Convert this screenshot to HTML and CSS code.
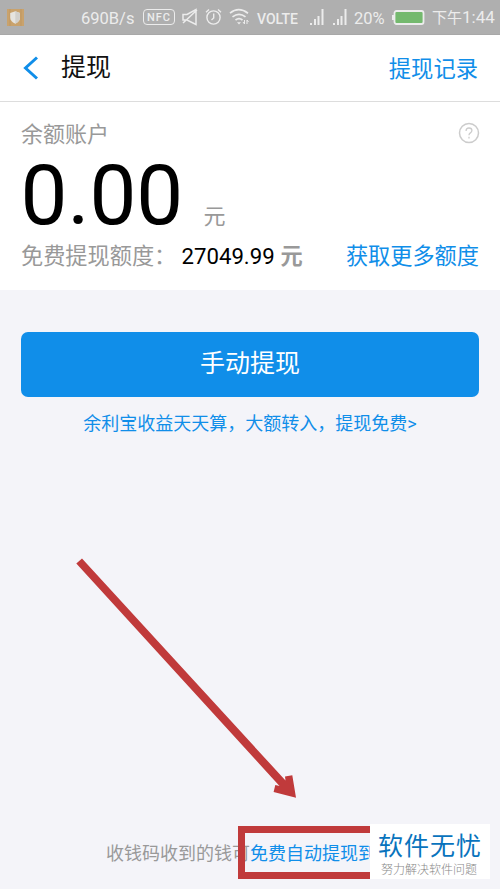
FILE: index.html
```html
<!DOCTYPE html>
<html lang="zh-CN">
<head>
<meta charset="utf-8">
<title>提现</title>
<link rel="stylesheet" href="styles.css">
</head>
<body>
<div class="screen">
  <div class="status">
    <svg class="shield" width="17" height="17" viewBox="0 0 17 17"><rect width="17" height="17" fill="#c9a26c"/><path d="M3 0v17M14 0v17" stroke="#b98f58" opacity=".5"/><path d="M8.300 2.300L13 4v4.500q0 4-4.700 6.300Q3.200 12.500 3.200 8.500V4z" fill="#e6e4df"/><path d="M8.300 2.300L13 4v4.500q0 4-4.700 6.300z" fill="#d2d0cb"/></svg>
    <span class="speed">690B/s</span>
    <span class="nfc">NFC</span>
    <svg class="mute" width="17" height="18" viewBox="0 0 17 18" fill="none" stroke="#ececec" stroke-width="1.500"><path d="M1 6.500h4L14 1.500v15L5 12H1zM1 15L15 2"/></svg>
    <svg class="alarm" width="17" height="18" viewBox="0 0 17 18" fill="none" stroke="#ececec" stroke-width="1.400"><circle cx="8.500" cy="9.500" r="6.600"/><path d="M8.700 5.500v4.500L6.500 12M1 4.200L4 1.500M16 4.200L13 1.500"/></svg>
    <svg class="wifi" width="21" height="18" viewBox="0 0 21 18" fill="none" stroke="#ececec" stroke-width="1.700"><path d="M1 5.200q8.500-7 18 0M3.500 8.800q6.500-5 13 0M6.500 12q3.500-2.800 7 0"/><path d="M8 14.300h4l-2 2.200z" fill="#ececec" stroke="none"/><path d="M15.500 12v4M18 12v4M14 14l1.500 2M19.500 14L18 12" stroke-width="1"/></svg>
    <span class="volte">VOLTE</span>
    <svg class="signal" width="15" height="17" viewBox="0 0 15 17" fill="#ececec"><path d="M0 14h2v2H0zM4 10h2v6H4zM7.500 7h2v9h-2zM11.500 0h2v16h-2z"/></svg>
    <svg class="signal two" width="15" height="17" viewBox="0 0 15 17" fill="#ececec"><path d="M0 14h2v2H0zM4 10h2v6H4zM7.500 7h2v9h-2zM11.500 0h2v16h-2z"/></svg>
    <span class="percent">20%</span>
    <svg class="battery" width="33" height="15" viewBox="0 0 33 15"><rect x="2.500" y="1" width="29" height="13" rx="2" fill="#74b96e" stroke="#ececec" stroke-width="1.800"/><path d="M0 5h2v5H0z" fill="#ececec"/></svg>
    <span class="time"><span class="period">下午</span>1:44</span>
  </div>
  <header class="nav">
    <svg class="back" width="16" height="24" viewBox="0 0 16 24" fill="none" stroke="#108ee9" stroke-width="3"><path d="M15 1.500L3.500 12L15 22.500"/></svg>
    <h1>提现</h1>
    <a class="record">提现记录</a>
  </header>
  <section class="account">
    <div class="row label-row"><span>余额账户</span>
      <svg width="22" height="22" viewBox="0 0 22 22" fill="none" stroke="#ccc" stroke-width="1.500"><circle cx="11" cy="11" r="9.500"/><path d="M8.100 9q0-3 2.900-3t2.900 2.600q0 1.300-1.500 2.300-1.400.9-1.400 2.400M11 14.800v1.600" stroke-width="1.300"/></svg>
    </div>
    <div class="balance"><span class="amount">0.00</span><span class="unit">元</span></div>
    <div class="row quota"><span class="quota-label">免费提现额度：</span><span class="quota-value">27049.99</span><b>元</b><a class="more">获取更多额度</a></div>
  </section>
  <main>
    <button class="primary">手动提现</button>
    <a class="promo">余利宝收益天天算，大额转入，提现免费&gt;</a>
  </main>
  <footer><span>收钱码收到的钱可</span><a>免费自动提现到卡</a></footer>
  <svg class="arrow" width="500" height="889" viewBox="0 0 500 889"><path d="M82 558.500L285.500 780.500L285 776.500L292.300 775.300L296 797.700L273.600 792L275.300 785L279.500 786L76.300 563.500z" fill="#c03a3b"/></svg>
  <div class="highlight"></div>
  <div class="watermark"><strong>软件无忧</strong><span>努力解决软件问题</span></div>
</div>
</body>
</html>
```
FILE: styles.css
```css
* { box-sizing: border-box; }
body { margin: 0; font-family: Roboto, "Noto Sans CJK SC", sans-serif; background: #f4f4f9; }
.screen { position: relative; width: 500px; height: 889px; overflow: hidden; display: flex; flex-direction: column; background: #f4f4f9; }
.status { height: 35px; flex: none; background: #afafaf; color: #ececec; display: flex; align-items: center; font-size: 16.500px; line-height: 35px; white-space: nowrap; border-bottom: 1px solid #a8a8a8; }
.status > * { flex: none; }
.shield { margin-left: 7px; }
.speed { width: 61px; margin-left: 57px; padding-top: 2px; }
.nfc { width: 32px; height: 16px; border: 1.500px solid #ececec; border-radius: 4px; font: 500 11px/15px Roboto, sans-serif; letter-spacing: 1px; text-align: center; margin-left: 1px; }
.mute { margin-left: 7px; }
.alarm { margin-left: 6px; }
.wifi { margin-left: 7px; }
.volte { width: 46px; margin-left: 7px; font-size: 14px; font-weight: 500; padding-top: 4px; }
.signal { margin-left: 7px; }
.signal.two { margin-left: 8px; }
.percent { width: 34px; margin-left: 6px; font-size: 16.500px; padding-top: 2px; }
.battery { margin-left: 4px; }
.time { margin-left: 7px; font-size: 17px; padding-top: 2px; }
.period { font-size: 15px; }
.nav { height: 67px; flex: none; background: #fff; border-bottom: 1px solid #ddd; display: flex; align-items: center; padding: 0 22px; }
.back { flex: none; }
h1 { margin: 0 auto 0 23px; font-size: 25px; line-height: 36px; font-weight: 400; color: #111; }
.record { color: #108ee9; font-size: 22.300px; line-height: 34px; padding-top: 2px; }
.account { height: 188px; flex: none; background: #fff; padding: 17px 21px 0; color: #999; }
.row { display: flex; align-items: center; white-space: nowrap; }
.label-row { height: 32px; justify-content: space-between; font-size: 22px; line-height: 32px; }
.label-row svg { margin: -4px -1px 0 0; }
.balance { height: 88px; display: flex; align-items: baseline; }
.amount { font-size: 83.500px; line-height: 90px; color: #000; width: 183px; margin-left: -.5px; }
.unit { font-size: 22px; line-height: 32px; }
.quota { height: 34px; font-size: 22.200px; line-height: 34px; }
.quota-label { width: 160.500px; }
.quota-value { width: 99px; color: #000; }
.quota b { font-weight: 700; }
.more { color: #108ee9; margin-left: auto; }
main { flex: 1; padding: 41.500px 21px 0; display: flex; flex-direction: column; align-items: center; }
.primary { width: 458px; height: 65px; border: 0; border-radius: 7px; background: #108ee9; color: #fff; font: 400 25px/36px Roboto, "Noto Sans CJK SC", sans-serif; padding: 0 0 1px; }
.promo { margin-top: 13.400px; font-size: 18px; line-height: 28px; color: #108ee9; white-space: nowrap; }
footer { height: 49px; flex: none; padding-left: 106px; font-size: 18px; line-height: 28px; white-space: nowrap; color: #999; }
footer a { color: #108ee9; }
.arrow { position: absolute; left: 0; top: 0; }
.highlight { position: absolute; left: 238px; top: 826px; width: 200px; height: 53px; border: 7px solid #c03a3b; }
.watermark { position: absolute; left: 370px; top: 824px; width: 120px; height: 55px; background: #fff; padding: 5px 0 0 8px; display: flex; flex-direction: column; white-space: nowrap; }
.watermark strong { font-size: 25px; line-height: 35px; letter-spacing: 1px; font-weight: 400; color: #0873bd; }
.watermark span { font-size: 12px; line-height: 13px; color: #888; margin-left: 3px; font-weight: 300; }
```
